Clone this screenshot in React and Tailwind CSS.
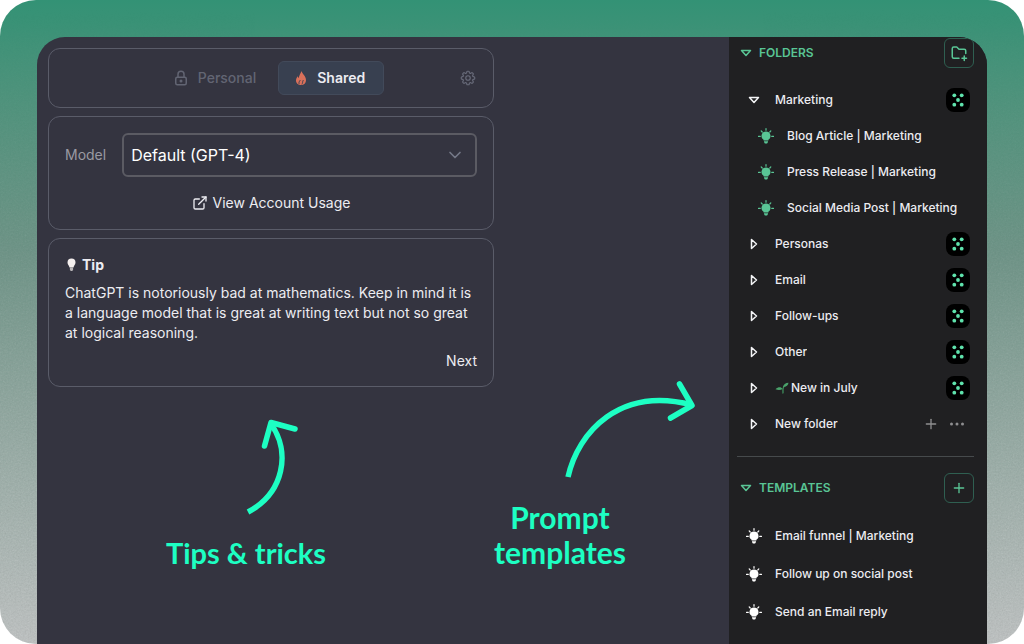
import { ChevronDown, ExternalLink, Plus } from "lucide-react";
import { TbFolderPlus, TbLock } from "react-icons/tb";
import { HiOutlineCog8Tooth } from "react-icons/hi2";

const FOLDERS = [
  {
    name: "Marketing",
    open: true,
    templates: [
      "Blog Article | Marketing",
      "Press Release | Marketing",
      "Social Media Post | Marketing",
    ],
  },
  { name: "Personas" },
  { name: "Email" },
  { name: "Follow-ups" },
  { name: "Other" },
  { name: "New in July", sprout: true },
  { name: "New folder", editable: true },
];

const TEMPLATES = [
  "Email funnel | Marketing",
  "Follow up on social post",
  "Send an Email reply",
];

function Flame() {
  return (
    <svg viewBox="0 0 12 16" className="w-3 h-4" aria-hidden="true">
      <path
        d="M6.6 1c.3 2.500 4.400 5 4.400 9 0 3-2 5-5 5s-5-2-5-4.600c0-1.900 1-3.200 1.900-4.200.1 1 .4 1.600.9 1.900C4 5.600 5.600 3.400 6.600 1z"
        fill="#d9705a"
      />
      <path
        d="M4.200 14.200c-.8-1.700.2-3 1.200-4.200M6.800 14.400c1.300-1.400.4-3 1.600-4.400"
        stroke="#3b4254"
        strokeWidth="0.900"
        fill="none"
      />
    </svg>
  );
}

function TipBulb() {
  return (
    <svg viewBox="0 0 12 16" className="w-3 h-4" aria-hidden="true">
      <path
        d="M6.500 1.500a4 4 0 0 1 4 4c0 2.200-1.700 3-2 5h-4c-.3-2-2-2.800-2-5a4 4 0 0 1 4-4z"
        fill="#f4efee"
      />
      <path d="M4.900 10.500h3.200v2.500L7.200 14H5.800l-.9-1z" fill="#b9b6b8" />
    </svg>
  );
}

function Sprout() {
  return (
    <svg viewBox="0 0 14 12" className="w-3.5 h-3" aria-hidden="true">
      <path d="M8 11.500C7.400 8.500 7.800 6 9 4" stroke="#3f8f5c" strokeWidth="1.300" fill="none" />
      <path d="M8 5C8.400 2.200 10.500 1 13.500.8c-.2 2.600-2.200 4.200-5.500 4.200z" fill="#4aa36b" />
      <path d="M7.500 7C6.300 5 3.500 4.600.5 7.200c2.500 1 5.300.9 7-.2z" fill="#4aa36b" />
    </svg>
  );
}

function Bulb({ className }) {
  return (
    <svg viewBox="0 0 16 16" className={`w-4 h-4 shrink-0 ${className}`} fill="currentColor" aria-hidden="true">
      <path d="M8 3.500a4.500 4.500 0 0 1 2.400 8.300v.7H5.600v-.7A4.500 4.500 0 0 1 8 3.500z" />
      <path d="M6 13.200h4v.8l-.9 1.500H6.900L6 14z" />
      <path
        d="M8 .6v1.600M3.200 2.900l1 1.100M12.800 2.900l-1 1.100M.5 8.300h1.800M13.700 8.300h1.800"
        stroke="currentColor"
        strokeWidth="1.200"
        strokeLinecap="round"
      />
    </svg>
  );
}

function Triangle({ open, className }) {
  return (
    <svg viewBox="0 0 12 12" className={`w-3 h-3 shrink-0 ${className}`} aria-hidden="true">
      <path
        d={open ? "M1.500 3.500h9L6 8.500z" : "M3.500 1.500v9L8.500 6z"}
        fill="none"
        stroke="currentColor"
        strokeWidth="1.500"
        strokeLinejoin="round"
      />
    </svg>
  );
}

function DiceButton({ label }) {
  return (
    <button aria-label={label} className="w-6 h-6 shrink-0 rounded-lg bg-black flex items-center justify-center">
      <svg viewBox="0 0 12 14" className="w-3 h-3.5 text-[#5fe3ad]" fill="currentColor" aria-hidden="true">
        <circle cx="2.300" cy="2.300" r="1.900" />
        <circle cx="9.700" cy="2.300" r="1.900" />
        <circle cx="6" cy="7" r="1.900" />
        <circle cx="2.300" cy="11.700" r="1.900" />
        <circle cx="9.700" cy="11.700" r="1.900" />
      </svg>
    </button>
  );
}

function SectionHeader({ title, action, children }) {
  return (
    <div className="flex items-center pl-[3px] text-[#59c595]">
      <Triangle open />
      <h2 className="ml-[7px] flex-1 font-semibold">{title}</h2>
      <button
        aria-label={action}
        className="w-[30px] h-[30px] rounded-md border border-[#2f5f51] flex items-center justify-center"
      >
        {children}
      </button>
    </div>
  );
}

function Folder({ folder }) {
  return (
    <li>
      <div className="flex items-center h-9 pl-[11px] pr-1">
        <Triangle open={folder.open} className="text-gray-100" />
        <span className="ml-[15px] flex-1 flex items-center gap-0.5 min-w-0">
          {folder.sprout && <Sprout />}
          <span className="truncate leading-[14px]">{folder.name}</span>
        </span>
        {folder.editable ? (
          <span className="flex items-center gap-2.5 pr-[5px] text-[#8e8e90]">
            <button aria-label="Add to folder">
              <Plus className="w-4 h-4" />
            </button>
            <button aria-label="More">
              <svg viewBox="0 0 16 4" className="w-4 h-1" fill="currentColor" aria-hidden="true">
                <circle cx="2.500" cy="2" r="1.500" />
                <circle cx="8" cy="2" r="1.500" />
                <circle cx="13.500" cy="2" r="1.500" />
              </svg>
            </button>
          </span>
        ) : (
          <DiceButton label={`Options for ${folder.name}`} />
        )}
      </div>
      {folder.templates && (
        <ul>
          {folder.templates.map((t) => (
            <li key={t} className="flex items-center h-9 pl-[21px]">
              <Bulb className="text-[#59c595]" />
              <span className="ml-[13px] truncate leading-[14px]">{t}</span>
            </li>
          ))}
        </ul>
      )}
    </li>
  );
}

function Sidebar() {
  return (
    <aside className="w-[258px] shrink-0 bg-[#202022] pl-2 pr-[13px] pt-px text-xs font-medium text-[#ececf1]">
      <SectionHeader title="FOLDERS" action="New folder">
        <TbFolderPlus className="w-[18px] h-[18px]" />
      </SectionHeader>
      <ul className="mt-3.5">
        {FOLDERS.map((f) => (
          <Folder key={f.name} folder={f} />
        ))}
      </ul>
      <hr className="mt-3.5 mb-4 border-[#464a4c]" />
      <SectionHeader title="TEMPLATES" action="New template">
        <Plus className="w-4 h-4" />
      </SectionHeader>
      <ul className="mt-3.5">
        {TEMPLATES.map((t) => (
          <li key={t} className="flex items-center h-[38px] pl-[9px]">
            <Bulb className="text-white" />
            <span className="ml-[13px] truncate leading-[14px]">{t}</span>
          </li>
        ))}
      </ul>
    </aside>
  );
}

function Panel({ className, children }) {
  return (
    <section className={`rounded-xl border border-[#5a5c69] ${className}`}>{children}</section>
  );
}

export default function App() {
  return (
    <div className="relative min-h-screen flex flex-col overflow-hidden rounded-[36px] px-[37px] pt-[37px] bg-linear-to-b from-[#339275] via-[#6b9184] via-40% to-[#bcc0c0] font-['Inter',sans-serif]">
      {/* Grain on the backdrop, stronger towards the bottom */}
      <svg
        className="absolute inset-0 w-full h-full opacity-30 mask-t-from-10% mask-t-to-100%"
        aria-hidden="true"
      >
        <filter id="grain">
          <feTurbulence type="fractalNoise" baseFrequency="0.600" numOctaves="2" />
          <feColorMatrix type="saturate" values="0" />
        </filter>
        <rect width="100%" height="100%" filter="url(#grain)" />
      </svg>

      <div className="relative flex-1 flex overflow-hidden rounded-t-[28px] bg-[#343440]">
        <main className="relative flex-1 pl-[11px] pt-[11px]">
          <div className="w-[446px] flex flex-col gap-2 text-sm text-[#ececf1]">
            {/* Workspace switch */}
            <Panel className="relative flex items-center justify-center h-[60px]">
              <div className="flex items-center gap-[22px] pl-3.5">
                <button className="flex items-center gap-2 font-medium text-[#626573]">
                  <TbLock className="w-[18px] h-[18px]" />
                  Personal
                </button>
                <button className="flex items-center gap-2.5 h-[34px] pl-4 pr-[18px] rounded-md border border-[#424a5a] bg-[#384050] font-semibold">
                  <Flame />
                  Shared
                </button>
              </div>
              <button aria-label="Settings" className="absolute right-4 text-[#686b7a]">
                <HiOutlineCog8Tooth className="w-[18px] h-[18px]" />
              </button>
            </Panel>

            {/* Model picker */}
            <Panel className="px-4 pt-4 pb-4">
              <div className="flex items-center gap-4">
                <label htmlFor="model" className="text-[#9a9aa2]">
                  Model
                </label>
                <div className="relative flex-1">
                  <select
                    id="model"
                    className="w-full h-11 appearance-none rounded-md border-2 border-[#5b5b63] bg-transparent px-[7px] text-base text-white"
                  >
                    <option>Default (GPT-4)</option>
                  </select>
                  <ChevronDown
                    className="absolute right-3 top-3 w-5 h-5 text-[#747887] pointer-events-none"
                  />
                </div>
              </div>
              <a href="#usage" className="mt-4 flex items-center justify-center gap-[5px] leading-5">
                <ExternalLink className="w-4 h-4" />
                View Account Usage
              </a>
            </Panel>

            {/* Tip of the day */}
            <Panel className="px-4 pt-4 pb-[15px] leading-5">
              <h3 className="flex items-center gap-[5px] font-bold">
                <TipBulb />
                Tip
              </h3>
              <p className="mt-2">
                ChatGPT is notoriously bad at mathematics. Keep in mind it is a language model that is
                great at writing text but not so great at logical reasoning.
              </p>
              <div className="mt-2 flex justify-end">
                <button>Next</button>
              </div>
            </Panel>
          </div>

          {/* Callouts pointing at the two areas */}
          <div className="absolute left-[119px] top-[380px] w-[180px] flex flex-col items-center font-['Lato',sans-serif] font-bold text-[29px] leading-[35px] text-[#1dffc3]">
            <svg viewBox="156 417 180 98" className="w-[180px] h-[98px]" fill="none" stroke="currentColor" strokeWidth="5.500" aria-hidden="true">
              <path d="M248 512C284 493 291 452 271 424" />
              <path d="M264.500 446L271 422.500L295 429" strokeLinecap="round" strokeLinejoin="round" />
            </svg>
            <p className="mt-5">Tips &amp; tricks</p>
          </div>
          <div className="absolute left-[427px] top-[342px] w-[236px] flex flex-col font-['Lato',sans-serif] font-bold text-[30px] leading-[35px] text-[#1dffc3]">
            <svg viewBox="464 379 236 101" className="w-[236px] h-[101px]" fill="none" stroke="currentColor" strokeWidth="5.500" aria-hidden="true">
              <path d="M568 477C578 432 620 386 692 405" />
              <path d="M679.500 384L692 405.500L670.500 418" strokeLinecap="round" strokeLinejoin="round" />
            </svg>
            <p className="mt-5 w-[192px] text-center">
              Prompt
              <br />
              templates
            </p>
          </div>
        </main>
        <Sidebar />
      </div>
    </div>
  );
}
